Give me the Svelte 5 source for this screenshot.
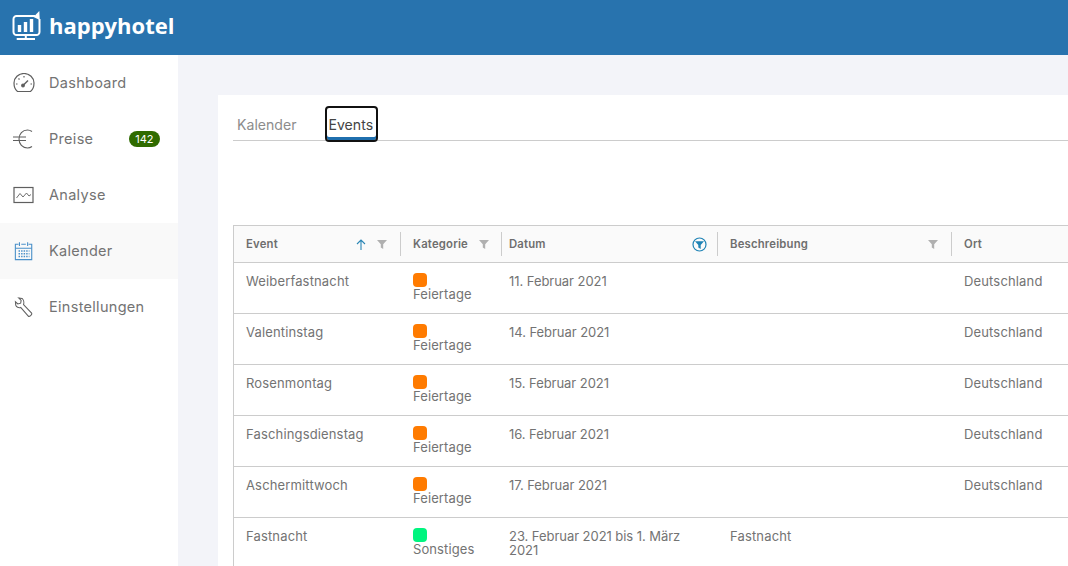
<script>
  const nav = [
    { id: 'dash', label: 'Dashboard' },
    { id: 'euro', label: 'Preise', badge: 142 },
    { id: 'chart', label: 'Analyse' },
    { id: 'cal', label: 'Kalender', active: true },
    { id: 'tool', label: 'Einstellungen' }
  ];
  const orange = '#ff7b00';
  const green = '#00f57f';
  const rows = [
    ['Weiberfastnacht', orange, 'Feiertage', '11. Februar 2021', '', 'Deutschland'],
    ['Valentinstag', orange, 'Feiertage', '14. Februar 2021', '', 'Deutschland'],
    ['Rosenmontag', orange, 'Feiertage', '15. Februar 2021', '', 'Deutschland'],
    ['Faschingsdienstag', orange, 'Feiertage', '16. Februar 2021', '', 'Deutschland'],
    ['Aschermittwoch', orange, 'Feiertage', '17. Februar 2021', '', 'Deutschland'],
    ['Fastnacht', green, 'Sonstiges', '23. Februar 2021 bis 1. März 2021', 'Fastnacht', '']
  ];
</script>

{#snippet funnel()}
  <svg class="funnel" viewBox="0 0 10 10"><path d="M0 1h10L6.200 5.200V10L3.800 8.600V5.200z" /></svg>
{/snippet}

<div class="page">
  <header class="topbar">
    <svg class="logo" viewBox="0 0 30 30" fill="none" stroke="#fff">
      <path d="M23 6H4.500a3 3 0 0 0-3 3v13a3 3 0 0 0 3 3h20a3 3 0 0 0 3-3V9" stroke-width="2" />
      <path d="M21.500 7 27.300 1l.5 9z" fill="#fff" stroke="none" />
      <path d="M7.500 22v-7M13.500 22V12M19.500 22V9" stroke-width="3.400" />
      <path d="M13.800 25v4M4.700 29h18.300" stroke-width="2" />
    </svg>
    <span class="brand">happyhotel</span>
  </header>

  <div class="body">
    <nav class="sidebar">
      {#each nav as item}
        <div class="nav-item" class:active={item.active}>
          <span class="nav-icon">
            {#if item.id === 'dash'}
              <svg viewBox="0 0 22 20" fill="none" stroke="#5f5f5f" stroke-width="1.200">
                <path d="M4.500 18.500h13c2-1.500 3.500-4.500 3.500-8.500a10 9.500 0 0 0-20 0c0 4 1.500 7 3.500 8.500z" />
                <path d="M10 12.500 15 7.500" stroke-width="1.400" />
                <circle cx="10" cy="12.500" r="1.300" fill="#5f5f5f" />
                <path d="M3 11h1.500M17.500 11H19M11 3v1.500M5.500 5.500l1 1" />
              </svg>
            {:else if item.id === 'euro'}
              <svg viewBox="0 0 22 20" fill="none" stroke="#5f5f5f" stroke-width="1.100">
                <path d="M19 2.500C17.500 1.500 16 1 14.500 1 9.500 1 6 5 6 10s3.500 9 8.500 9c1.500 0 3-.5 4.500-1.500" />
                <path d="M0 8h13M0 11.500h13" />
              </svg>
            {:else if item.id === 'chart'}
              <svg viewBox="0 0 22 20" fill="none" stroke="#5f5f5f">
                <rect x="1" y="2.500" width="19" height="15" stroke-width="1.200" />
                <path d="M3.500 13 7 8.500l3 3.500 3.500-4 2.500 3 2-1.500" stroke-width=".9" />
              </svg>
            {:else if item.id === 'cal'}
              <svg viewBox="0 0 22 22" fill="none" stroke="#4a90c9" stroke-width="1.200">
                <path d="M5 3.500H1.500v17h18v-17H16M8 3.500h5" />
                <path d="M1.500 8h18M6 1.500v4M15 1.500v4" />
                <path d="M5 11h12M5 14h12M5 17h12" stroke-width="1.600" stroke-dasharray="1.600 1.200" />
              </svg>
            {:else}
              <svg viewBox="1 0 19 21" fill="none" stroke="#5f5f5f" stroke-width="1.100">
                <path d="M8.500 1.500 5 1l2.500 2.500-.5 3-3 .8L1.500 5l.3 3.500c.6 2 3 3.200 5.200 2.500l8 9c1 1.200 4.500-1.600 3.500-3l-8.500-9c.8-2.500-.2-5.500-1.500-6.500z" />
              </svg>
            {/if}
          </span>
          <span class="nav-label">{item.label}</span>
          {#if item.badge}<span class="badge">{item.badge}</span>{/if}
        </div>
      {/each}
    </nav>

    <main class="content">
      <section class="card">
        <div class="tabs">
          <span class="tab">Kalender</span>
          <span class="tab current">Events</span>
        </div>

        <div class="grid">
          <div class="row head">
            <div class="cell c1">
              <span class="title">Event</span>
              <svg class="arrow" viewBox="0 0 10 11" fill="none" stroke="#2a86b5" stroke-width="1.100"><path d="M5 11V1M1 5l4-4 4 4" /></svg>
              {@render funnel()}
            </div>
            <div class="cell c2">
              <span class="title">Kategorie</span>
              {@render funnel()}
            </div>
            <div class="cell c3">
              <span class="title">Datum</span>
              <svg class="funnel-on" viewBox="0 0 15 15">
                <circle cx="7.500" cy="7.500" r="6.500" fill="none" stroke="#1f83b5" stroke-width="1.200" />
                <path d="M3 4.200h9L8.700 8v4L6.300 10.600V8z" fill="#1f83b5" />
              </svg>
            </div>
            <div class="cell c4">
              <span class="title">Beschreibung</span>
              {@render funnel()}
            </div>
            <div class="cell c5"><span class="title">Ort</span></div>
          </div>

          {#each rows as r}
            <div class="row">
              <div class="cell c1">{r[0]}</div>
              <div class="cell c2">
                <span class="swatch" style="background: {r[1]}"></span>
                <span class="cat">{r[2]}</span>
              </div>
              <div class="cell c3 date">{r[3]}</div>
              <div class="cell c4">{r[4]}</div>
              <div class="cell c5">{r[5]}</div>
            </div>
          {/each}
        </div>
      </section>
    </main>
  </div>
</div>

<style>
  :global(body) {
    margin: 0;
    overflow: hidden;
  }

  .page {
    width: 1068px;
    height: 566px;
    overflow: hidden;
    display: flex;
    flex-direction: column;
    background: #f3f4f9;
    font-family: 'Inter', 'Liberation Sans', sans-serif;
    color: #666;
  }

  .topbar {
    height: 55px;
    flex: none;
    display: flex;
    align-items: flex-start;
    gap: 7px;
    padding: 10px 0 0 12px;
    box-sizing: border-box;
    background: #2873ae;
  }

  .logo {
    width: 30px;
    height: 30px;
  }

  .brand {
    font-family: 'Open Sans', sans-serif;
    font-weight: 700;
    font-size: 22px;
    line-height: 30px;
    color: #fff;
  }

  .body {
    flex: 1;
    display: flex;
    min-height: 0;
  }

  .sidebar {
    width: 178px;
    flex: none;
    background: #fff;
  }

  .nav-item {
    height: 56px;
    display: flex;
    align-items: center;
    padding-left: 13px;
    font-size: 14.500px;
    letter-spacing: 0.3px;
    color: #737373;
  }

  .nav-item.active {
    background: #f9f9f9;
  }

  .nav-icon {
    width: 22px;
    height: 20px;
    margin-right: 14px;
    display: flex;
    align-items: center;
  }

  .nav-icon svg {
    width: 22px;
    height: 20px;
  }

  .nav-label {
    flex: 1;
    padding-bottom: 2px;
  }

  .badge {
    margin-right: 18px;
    padding: 0 6.500px;
    height: 16px;
    line-height: 16px;
    border-radius: 8px;
    background: #2f6b00;
    color: #fff;
    font-size: 11px;
    letter-spacing: 0;
  }

  .content {
    flex: 1;
    min-width: 0;
    padding: 40px 0 0 40px;
  }

  .card {
    height: 100%;
    padding: 11px 0 0 15px;
    box-sizing: border-box;
    background: #fff;
  }

  .tabs {
    height: 34px;
    display: flex;
    gap: 28px;
    padding-left: 4px;
    border-bottom: 1px solid #ccc;
    font-size: 14.100px;
  }

  .tab {
    height: 36px;
    box-sizing: border-box;
    padding-top: 10px;
    color: #8c8c8c;
  }

  .tab.current {
    padding: 8px 3px 0 2px;
    color: #444;
    border: 2px solid #111;
    border-radius: 4px;
    box-shadow: inset 0 -3px 0 #1f6fae;
    background: #fff;
  }

  .grid {
    margin-top: 84px;
    border: 1px solid #ccc;
    border-right: 0;
    font-size: 13px;
    line-height: 14px;
    letter-spacing: 0.15px;
    color: #737373;
  }

  .row {
    display: flex;
    height: 51px;
    box-sizing: border-box;
    border-top: 1px solid #ccc;
  }

  .row.head {
    height: 36px;
    border-top: 0;
    background: #fafafa;
    align-items: center;
    font-size: 11.300px;
    font-weight: 600;
    color: #6e6e6e;
  }

  .cell {
    flex: none;
    box-sizing: border-box;
    padding: 10.500px 12px 0;
  }

  .head .cell {
    display: flex;
    align-items: center;
    height: 24px;
    padding-top: 0;
    padding-bottom: 0;
    border-left: 1px solid #ccc;
  }

  .head .c1 {
    width: 166px;
    border-left: 0;
  }

  .c1 {
    width: 167px;
  }

  .c2 {
    width: 101px;
    padding-top: 10px;
  }

  .c3 {
    width: 216px;
    padding-left: 7px;
    padding-right: 24px;
  }

  .date {
    letter-spacing: -0.05px;
  }

  .c4 {
    width: 234px;
  }

  .c5 {
    width: 120px;
  }

  .title {
    flex: 1;
    letter-spacing: 0.2px;
  }

  .funnel {
    width: 10px;
    height: 10px;
    fill: #b0b0b0;
  }

  .c1 .funnel {
    margin-right: 1px;
  }

  .c4 .funnel {
    margin-right: 1px;
  }

  .arrow {
    width: 10px;
    height: 11px;
    margin-right: 11px;
  }

  .funnel-on {
    width: 15px;
    height: 15px;
    margin-right: -14px;
  }

  .swatch {
    display: block;
    width: 14px;
    height: 14px;
    border-radius: 4px;
  }

  .cat {
    display: block;
    letter-spacing: 0.1px;
  }

  .head .c3 {
    padding-right: 24px;
  }
</style>
